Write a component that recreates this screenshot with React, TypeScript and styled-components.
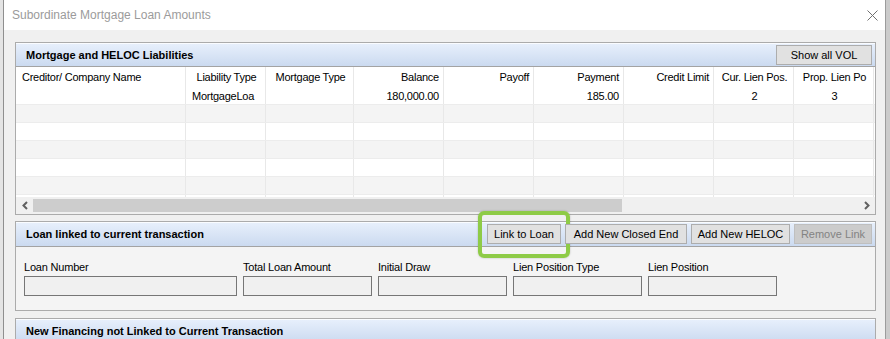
import React from 'react';
import styled, { createGlobalStyle } from 'styled-components';

const GlobalStyle = createGlobalStyle`
  html, body {
    margin: 0;
    padding: 0;
    background: #f0f0f0;
  }
  body {
    font-family: "Liberation Sans", Arial, sans-serif;
    font-size: 11px;
    color: #000;
  }
`;

const Screen = styled.div`
  display: flex;
  width: 890px;
  height: 339px;
  overflow: hidden;
`;

const DesktopEdge = styled.div`
  width: 3px;
  background: #e4e4e4;
`;

const DesktopEdgeRight = styled.div`
  flex: 1;
  background: #cbcbcb;
`;

const Window = styled.div`
  width: 881px;
  display: flex;
  flex-direction: column;
  border-left: 1px solid #8f8f8f;
  border-right: 1px solid #9c9c9c;
  background: #f0f0f0;
`;

const TitleBar = styled.div`
  height: 30px;
  flex: none;
  display: flex;
  align-items: center;
  justify-content: space-between;
  padding: 0 7px 0 8px;
  background: #fff;
  font-size: 12px;
  color: #9b9b9b;
`;

const CloseIcon = styled.svg`
  width: 11px;
  height: 11px;
  margin-top: 1px;
`;

const Body = styled.div`
  flex: 1;
  padding: 12px 9px 0 11px;
`;

const Panel = styled.section<{ $gap?: number }>`
  border: 1px solid #ababab;
  margin-top: ${(p) => p.$gap ?? 0}px;
  background: #f4f4f4;
`;

const PanelHeader = styled.div<{ $tall?: boolean }>`
  height: ${(p) => (p.$tall ? 24 : 23)}px;
  display: flex;
  align-items: center;
  justify-content: space-between;
  padding: 0 3px 0 10px;
  background: linear-gradient(#e8f0fc, #cbdaf0);
  box-shadow: inset 0 1px 0 #fafcff;
  border-bottom: 1px solid #a3a3a3;
`;

const PanelTitle = styled.h3`
  margin: 0;
  font-size: 11px;
  font-weight: bold;
`;

const ButtonRow = styled.div`
  display: flex;
  gap: 4px;
`;

const WinButton = styled.button<{ $w: number; $highlight?: boolean }>`
  position: relative;
  width: ${(p) => p.$w}px;
  height: 20px;
  padding: 0;
  font-family: inherit;
  font-size: 11px;
  color: #000;
  background: #e1e1e1;
  border: 1px solid #adadad;
  &:disabled {
    color: #838383;
    background: #cccccc;
    border-color: #bfbfbf;
  }
  ${(p) =>
    p.$highlight &&
    `
    &::after {
      content: '';
      position: absolute;
      inset: -14px -10px -15px -10px;
      border: 4px solid #8ecb47;
      border-radius: 6px;
      box-shadow: 0 0 2px rgba(0, 0, 0, 0.25);
      pointer-events: none;
    }
  `}
`;

const columns = '170px 80px 88px 90px 90px 90px 90px 80px 80px';

const GridView = styled.div`
  height: 130px;
  overflow: hidden;
  background: #fff;
`;

const GridRow = styled.div<{ $header?: boolean; $alt?: boolean }>`
  display: grid;
  grid-template-columns: ${columns};
  height: ${(p) => (p.$header ? 20 : 18)}px;
  box-sizing: border-box;
  background: ${(p) => (p.$alt ? '#f4f4f4' : '#fff')};
  border-bottom: ${(p) => (p.$header ? 'none' : '1px solid #ececec')};
`;

const Cell = styled.div<{ $align?: 'left' | 'center' | 'right' }>`
  display: flex;
  align-items: center;
  justify-content: ${(p) =>
    p.$align === 'right' ? 'flex-end' : p.$align === 'center' ? 'center' : 'flex-start'};
  padding: 0 4px 0 6px;
  border-right: 1px solid #e8e8e8;
  white-space: nowrap;
  overflow: hidden;
  letter-spacing: -0.25px;
`;

const HScroll = styled.div`
  height: 17px;
  display: flex;
  align-items: stretch;
  background: #f0f0f0;
`;

const ScrollArrow = styled.div`
  width: 17px;
  display: flex;
  align-items: center;
  justify-content: center;
`;

const ScrollTrack = styled.div`
  flex: 1;
  padding: 2px 0;
`;

const ScrollThumb = styled.div`
  height: 100%;
  background: #cdcdcd;
`;

const FieldsArea = styled.div`
  display: flex;
  gap: 6px;
  padding: 14px 8px 14px;
`;

const Field = styled.label<{ $w: number }>`
  display: flex;
  flex-direction: column;
  width: ${(p) => p.$w}px;
`;

const FieldLabel = styled.span`
  line-height: 13px;
  margin-bottom: 2px;
  letter-spacing: -0.2px;
`;

const FieldBox = styled.input`
  height: 20px;
  box-sizing: border-box;
  border: 1px solid #767676;
  background: #f0f0f0;
  padding: 0 3px;
  font-family: inherit;
  font-size: 11px;
`;

type Col = { label: string; align: 'left' | 'center' | 'right' };

const headerCols: Col[] = [
  { label: 'Creditor/ Company Name', align: 'left' },
  { label: 'Liability Type', align: 'center' },
  { label: 'Mortgage Type', align: 'center' },
  { label: 'Balance', align: 'right' },
  { label: 'Payoff', align: 'right' },
  { label: 'Payment', align: 'right' },
  { label: 'Credit Limit', align: 'right' },
  { label: 'Cur. Lien Pos.', align: 'center' },
  { label: 'Prop. Lien Po', align: 'center' },
];

const dataRow: Col[] = [
  { label: '', align: 'left' },
  { label: 'MortgageLoa', align: 'left' },
  { label: '', align: 'left' },
  { label: '180,000.00', align: 'right' },
  { label: '', align: 'right' },
  { label: '185.00', align: 'right' },
  { label: '', align: 'right' },
  { label: '2', align: 'center' },
  { label: '3', align: 'center' },
];

const fields = [
  { label: 'Loan Number', w: 213 },
  { label: 'Total Loan Amount', w: 129 },
  { label: 'Initial Draw', w: 129 },
  { label: 'Lien Position Type', w: 129 },
  { label: 'Lien Position', w: 129 },
];

const Chevron: React.FC<{ dir: 'left' | 'right' }> = ({ dir }) => (
  <svg width="8" height="9" viewBox="0 0 8 9">
    <path
      d={dir === 'left' ? 'M6 1 L2.5 4.5 L6 8' : 'M2 1 L5.5 4.5 L2 8'}
      fill="none"
      stroke="#606060"
      strokeWidth="2"
    />
  </svg>
);

const App: React.FC = () => {
  return (
    <>
      <GlobalStyle />
      <Screen>
        <DesktopEdge />
        <Window>
          <TitleBar>
            <span>Subordinate Mortgage Loan Amounts</span>
            <CloseIcon viewBox="0 0 11 11">
              <path d="M0.5 0.5 L10.5 10.5 M10.5 0.5 L0.5 10.5" stroke="#707070" strokeWidth="1" />
            </CloseIcon>
          </TitleBar>
          <Body>
            <Panel>
              <PanelHeader>
                <PanelTitle>Mortgage and HELOC Liabilities</PanelTitle>
                <WinButton $w={96}>Show all VOL</WinButton>
              </PanelHeader>
              <GridView>
                <GridRow $header>
                  {headerCols.map((c) => (
                    <Cell key={c.label} $align={c.align}>
                      {c.label}
                    </Cell>
                  ))}
                </GridRow>
                <GridRow>
                  {dataRow.map((c, i) => (
                    <Cell key={i} $align={c.align}>
                      {c.label}
                    </Cell>
                  ))}
                </GridRow>
                {[1, 2, 3, 4, 5, 6].map((r) => (
                  <GridRow key={r} $alt={r % 2 === 1}>
                    {headerCols.map((c) => (
                      <Cell key={c.label} />
                    ))}
                  </GridRow>
                ))}
              </GridView>
              <HScroll>
                <ScrollArrow>
                  <Chevron dir="left" />
                </ScrollArrow>
                <ScrollTrack>
                  <ScrollThumb style={{ width: 589 }} />
                </ScrollTrack>
                <ScrollArrow>
                  <Chevron dir="right" />
                </ScrollArrow>
              </HScroll>
            </Panel>

            <Panel $gap={6}>
              <PanelHeader $tall>
                <PanelTitle>Loan linked to current transaction</PanelTitle>
                <ButtonRow>
                  <WinButton $w={74} $highlight>
                    Link to Loan
                  </WinButton>
                  <WinButton $w={122}>Add New Closed End</WinButton>
                  <WinButton $w={99}>Add New HELOC</WinButton>
                  <WinButton $w={78} disabled>
                    Remove Link
                  </WinButton>
                </ButtonRow>
              </PanelHeader>
              <FieldsArea>
                {fields.map((f) => (
                  <Field key={f.label} $w={f.w}>
                    <FieldLabel>{f.label}</FieldLabel>
                    <FieldBox readOnly />
                  </Field>
                ))}
              </FieldsArea>
            </Panel>

            <Panel $gap={7}>
              <PanelHeader>
                <PanelTitle>New Financing not Linked to Current Transaction</PanelTitle>
              </PanelHeader>
            </Panel>
          </Body>
        </Window>
        <DesktopEdgeRight />
      </Screen>
    </>
  );
};

export default App;
